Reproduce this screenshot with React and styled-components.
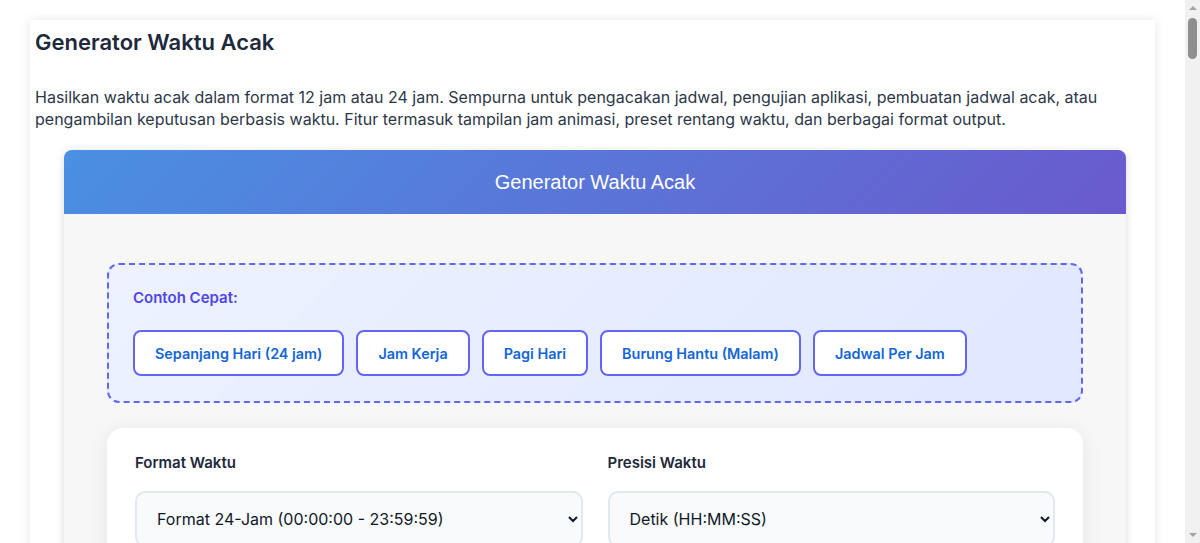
import React from 'react';
import styled, { createGlobalStyle } from 'styled-components';

const GlobalStyle = createGlobalStyle`
  * { box-sizing: border-box; }
  body {
    margin: 0;
    background: #ffffff;
    font-family: 'Inter', 'Noto Sans', sans-serif;
    color: #1e293b;
  }
`;

const presets = [
  'Sepanjang Hari (24 jam)',
  'Jam Kerja',
  'Pagi Hari',
  'Burung Hantu (Malam)',
  'Jadwal Per Jam',
];

const App = () => {
  return (
    <>
      <GlobalStyle />
      <Page>
        <Card>
          <Title>Generator Waktu Acak</Title>
          <Intro>
            Hasilkan waktu acak dalam format 12 jam atau 24 jam. Sempurna untuk pengacakan jadwal,
            pengujian aplikasi, pembuatan jadwal acak, atau pengambilan keputusan berbasis waktu.
            Fitur termasuk tampilan jam animasi, preset rentang waktu, dan berbagai format output.
          </Intro>
          <Tool>
            <ToolHeader>Generator Waktu Acak</ToolHeader>
            <ToolBody>
              <QuickBox>
                <QuickLabel>Contoh Cepat:</QuickLabel>
                <PresetRow>
                  {presets.map((p) => (
                    <PresetButton key={p}>{p}</PresetButton>
                  ))}
                </PresetRow>
              </QuickBox>
              <Settings>
                <Grid>
                  <Field>
                    <Label>Format Waktu</Label>
                    <Select defaultValue='24'>
                      <option value='24'>Format 24-Jam (00:00:00 - 23:59:59)</option>
                      <option value='12'>Format 12-Jam (12:00:00 AM - 11:59:59 PM)</option>
                    </Select>
                  </Field>
                  <Field>
                    <Label>Presisi Waktu</Label>
                    <Select defaultValue='s'>
                      <option value='s'>Detik (HH:MM:SS)</option>
                      <option value='m'>Menit (HH:MM)</option>
                    </Select>
                  </Field>
                  <Field>
                    <Label>Waktu Mulai</Label>
                    <Input type='text' defaultValue='00:00:00' />
                  </Field>
                  <Field>
                    <Label>Waktu Selesai</Label>
                    <Input type='text' defaultValue='23:59:59' />
                  </Field>
                </Grid>
              </Settings>
              <GenerateButton>Hasilkan Waktu Acak</GenerateButton>
            </ToolBody>
          </Tool>
        </Card>
      </Page>
      <ScrollTrack aria-hidden='true'>
        <ScrollArrow $up />
        <ScrollThumb />
        <ScrollArrow />
      </ScrollTrack>
    </>
  );
};

const Page = styled.div`
  padding: 20px 45px 20px 30px;
`;

const Card = styled.div`
  background: #fff;
  padding: 9px 5px 20px;
  box-shadow: 0 0 10px rgba(0, 0, 0, 0.1);
`;

const Title = styled.h2`
  margin: 0;
  font-size: 22px;
  line-height: 26px;
  font-weight: 600;
  color: #1e293b;
`;

const Intro = styled.p`
  margin: 31px 0 0;
  font-size: 16px;
  line-height: 22px;
  color: #2d3748;
`;

const Tool = styled.div`
  margin: 20px 24px 0 29px;
  border-radius: 8px;
  overflow: hidden;
  background: #f7f7f7;
  box-shadow: 0 2px 8px rgba(0, 0, 0, 0.15);
`;

const ToolHeader = styled.div`
  height: 64px;
  display: flex;
  align-items: center;
  justify-content: center;
  background: linear-gradient(135deg, #4a90e2, #6a5acd);
  color: #fff;
  font-family: 'Liberation Sans', Arial, sans-serif;
  font-size: 20px;
`;

const ToolBody = styled.div`
  padding: 49px 43px 40px;
`;

const QuickBox = styled.div`
  border: 2px dashed #6366f1;
  border-radius: 12px;
  padding: 24px 24px 25px;
  background: linear-gradient(135deg, #eef2ff, #e0e7ff);
`;

const QuickLabel = styled.div`
  font-size: 15px;
  line-height: 18px;
  font-weight: 600;
  color: #4f46e5;
  margin-bottom: 23px;
`;

const PresetRow = styled.div`
  display: flex;
  flex-wrap: wrap;
  gap: 12px;
`;

const PresetButton = styled.button`
  height: 46px;
  padding: 0 20px;
  border: 2px solid #6366f1;
  border-radius: 8px;
  background: #fff;
  color: #1366d6;
  font-family: 'Inter', sans-serif;
  font-size: 14.4px;
  font-weight: 600;
  cursor: pointer;
`;

const Settings = styled.div`
  margin-top: 25px;
  background: #fff;
  border-radius: 16px;
  padding: 26px 28px 28px;
  box-shadow: 0 4px 20px rgba(0, 0, 0, 0.08);
`;

const Grid = styled.div`
  display: grid;
  grid-template-columns: 1fr 1fr;
  column-gap: 25px;
  row-gap: 24px;
`;

const Field = styled.div`
  display: flex;
  flex-direction: column;
`;

const Label = styled.label`
  font-size: 15px;
  line-height: 18px;
  font-weight: 600;
  color: #1e293b;
  margin-bottom: 19px;
`;

const Select = styled.select`
  height: 56px;
  padding: 0 16px 0 16px;
  border: 2px solid #e2e8f0;
  border-radius: 10px;
  background: #f8fafc;
  font-family: 'Inter', sans-serif;
  font-size: 16px;
  color: #111827;
`;

const Input = styled.input`
  height: 56px;
  padding: 0 20px;
  border: 2px solid #e2e8f0;
  border-radius: 10px;
  background: #f8fafc;
  font-family: 'Inter', sans-serif;
  font-size: 16px;
  color: #111827;
`;

const GenerateButton = styled.button`
  display: block;
  margin: 30px auto 0;
  padding: 16px 40px;
  border: none;
  border-radius: 10px;
  background: linear-gradient(135deg, #4a90e2, #6a5acd);
  color: #fff;
  font-family: 'Inter', sans-serif;
  font-size: 17px;
  font-weight: 600;
`;

const ScrollTrack = styled.div`
  position: fixed;
  top: 0;
  right: 0;
  bottom: 0;
  width: 15px;
  background: #f1f1f1;
  display: flex;
  flex-direction: column;
  align-items: center;
`;

const ScrollArrow = styled.div`
  width: 0;
  height: 0;
  margin: ${(p) => (p.$up ? '6px 0 4px' : 'auto 0 6px')};
  border-left: 4px solid transparent;
  border-right: 4px solid transparent;
  ${(p) => (p.$up ? 'border-bottom: 4px solid #a3a3a3;' : 'border-top: 4px solid #a3a3a3;')}
`;

const ScrollThumb = styled.div`
  width: 9px;
  height: 41px;
  margin-top: 4px;
  border-radius: 5px;
  background: #8f8f8f;
`;

export default App;
